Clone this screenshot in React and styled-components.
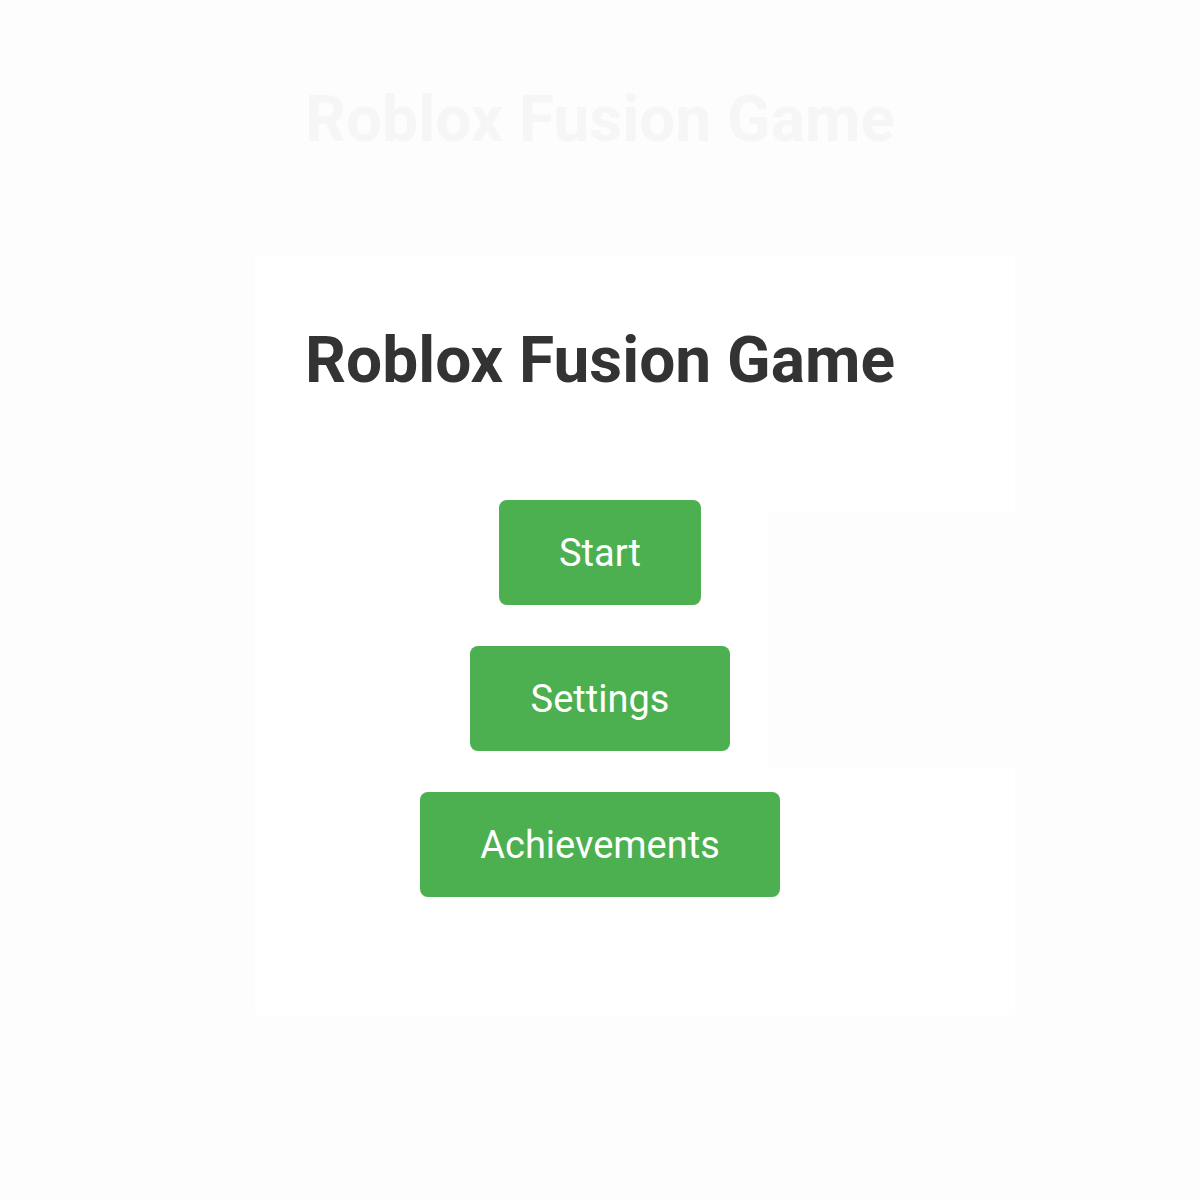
import React from "react";
import styled, { createGlobalStyle } from "styled-components";

const Global = createGlobalStyle`
  html, body { margin: 0; padding: 0; }
  body {
    background: #fdfdfd;
    font-family: Roboto, "Liberation Sans", sans-serif;
    width: 1200px;
    height: 1200px;
    overflow: hidden;
  }
`;

const Page = styled.div`
  width: 1200px;
  height: 1200px;
  display: flex;
  flex-direction: column;
  align-items: center;
`;

const GhostTitle = styled.h1`
  margin: 80px 0 0;
  font-size: 64px;
  font-weight: 700;
  line-height: 80px;
  color: #f6f6f6;
`;

const Card = styled.div`
  position: relative;
  margin-top: 95px;
  margin-left: 70px;
  width: 760px;
  height: 760px;
  background: #ffffff;
  display: flex;
  flex-direction: column;
  align-items: center;
  box-sizing: border-box;
  padding-top: 66px;
  padding-right: 70px;
`;

const Title = styled.h2`
  margin: 0;
  font-size: 64px;
  font-weight: 700;
  line-height: 80px;
  color: #333333;
  white-space: nowrap;
`;

const Menu = styled.div`
  margin-top: 99px;
  display: flex;
  flex-direction: column;
  align-items: center;
  gap: 41px;
`;

const MenuButton = styled.button`
  font-family: Roboto, "Liberation Sans", sans-serif;
  font-size: 38px;
  line-height: 45px;
  padding: 31px 60.5px 29px;
  border: none;
  border-radius: 8px;
  background: #4caf50;
  color: #ffffff;
  cursor: pointer;
`;

const SidePanel = styled.div`
  position: absolute;
  left: 513px;
  top: 257px;
  width: 249px;
  height: 256px;
  background: #fdfdfd;
`;

export default function App() {
  return (
    <>
      <Global />
      <Page>
        <GhostTitle>Roblox Fusion Game</GhostTitle>
        <Card>
          <Title>Roblox Fusion Game</Title>
          <Menu>
            <MenuButton>Start</MenuButton>
            <MenuButton>Settings</MenuButton>
            <MenuButton>Achievements</MenuButton>
          </Menu>
          <SidePanel />
        </Card>
      </Page>
    </>
  );
}
